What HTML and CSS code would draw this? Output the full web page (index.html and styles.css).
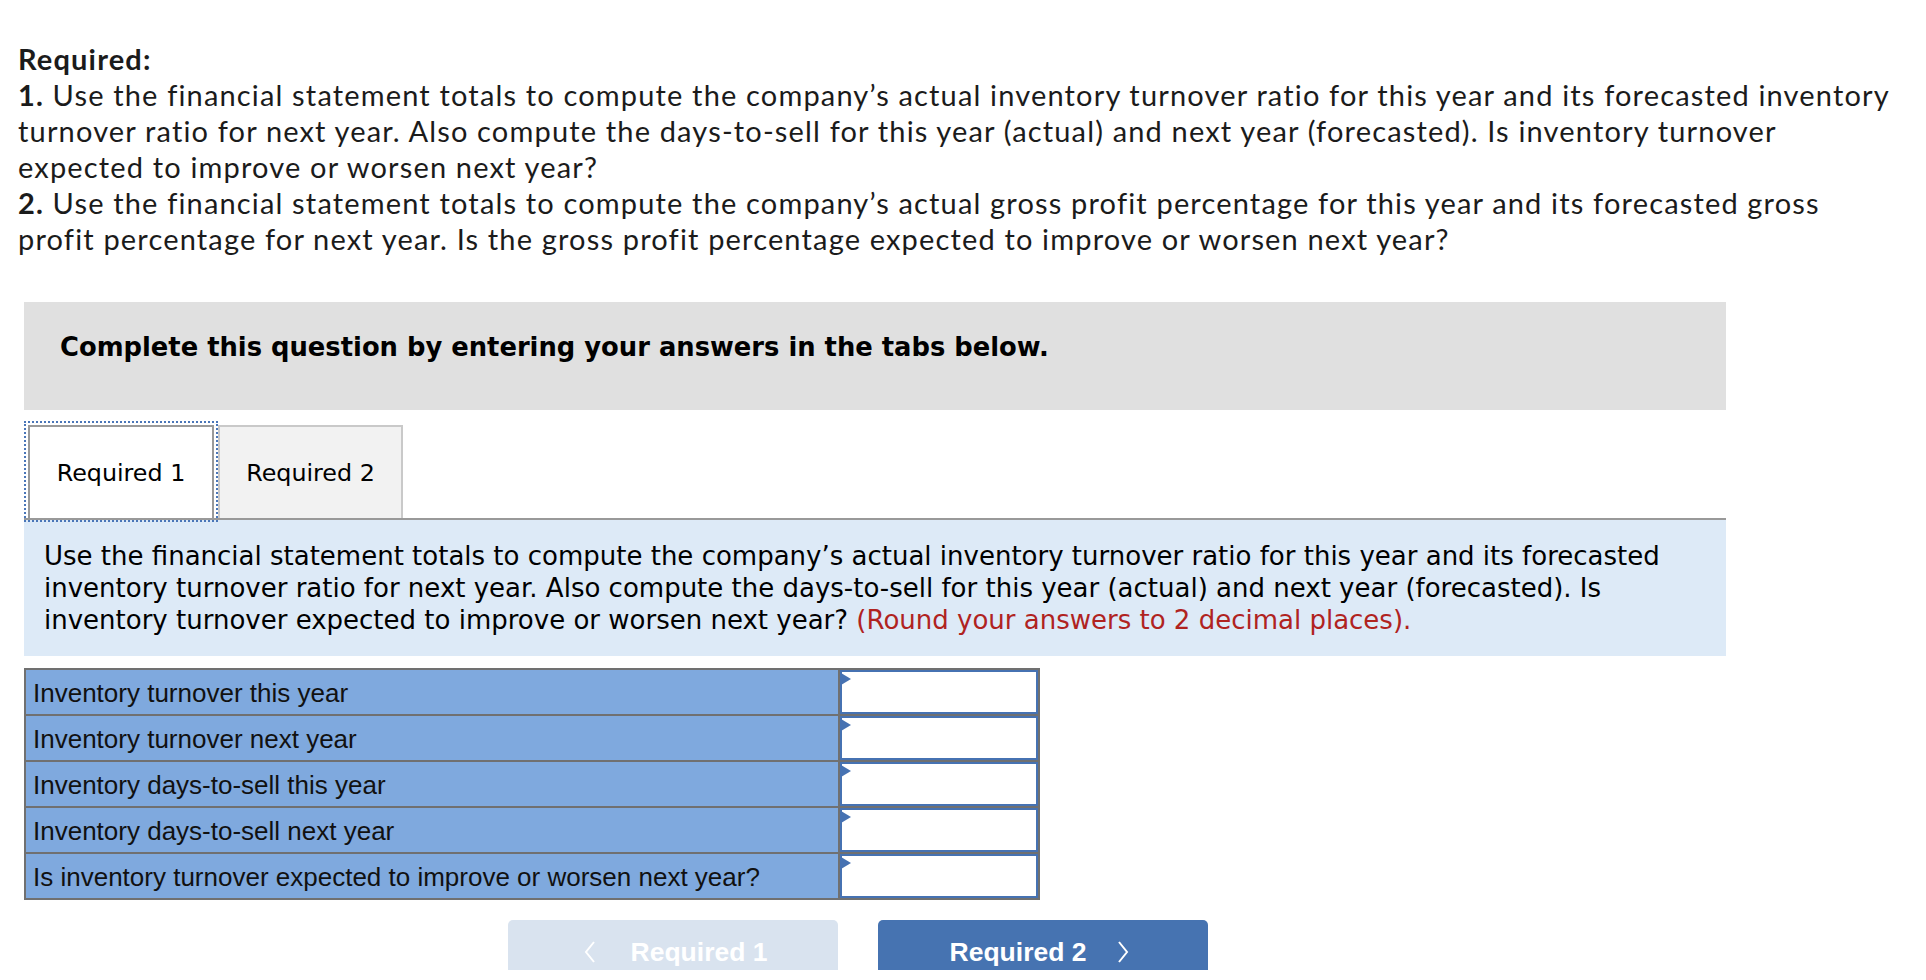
FILE: index.html
```html
<!DOCTYPE html>
<html lang="en">
<head>
<meta charset="utf-8">
<title>Required</title>
<link rel="stylesheet" href="styles.css">
</head>
<body>
<div class="page">
  <div class="req">
    <p class="req-line"><strong>Required:</strong></p>
    <p class="req-line"><strong>1.</strong> Use the financial statement totals to compute the company’s actual inventory turnover ratio for this year and its forecasted inventory turnover ratio for next year. Also compute the days-to-sell for this year (actual) and next year (forecasted). Is inventory turnover expected to improve or worsen next year?</p>
    <p class="req-line"><strong>2.</strong> Use the financial statement totals to compute the company’s actual gross profit percentage for this year and its forecasted gross profit percentage for next year. Is the gross profit percentage expected to improve or worsen next year?</p>
  </div>

  <div class="widget">
    <div class="banner">Complete this question by entering your answers in the tabs below.</div>

    <div class="tabs">
      <div class="tab tab-active">Required 1</div>
      <div class="tab">Required 2</div>
    </div>

    <div class="info">
      Use the financial statement totals to compute the company’s actual inventory turnover ratio for this year and its forecasted inventory turnover ratio for next year. Also compute the days-to-sell for this year (actual) and next year (forecasted). Is inventory turnover expected to improve or worsen next year? <span class="hint">(Round your answers to 2 decimal places).</span>
    </div>

    <div class="answers">
      <div class="label">Inventory turnover this year</div>
      <div class="cell"><div class="input"></div></div>
      <div class="label">Inventory turnover next year</div>
      <div class="cell"><div class="input"></div></div>
      <div class="label">Inventory days-to-sell this year</div>
      <div class="cell"><div class="input"></div></div>
      <div class="label">Inventory days-to-sell next year</div>
      <div class="cell"><div class="input"></div></div>
      <div class="label">Is inventory turnover expected to improve or worsen next year?</div>
      <div class="cell"><div class="input"></div></div>
    </div>

    <div class="nav">
      <div class="btn btn-prev">
        <svg class="chev" width="14" height="24" viewBox="0 0 14 24"><polyline points="11,2 3,12 11,22" fill="none" stroke="#ffffff" stroke-width="2"/></svg>
        <span>Required 1</span>
      </div>
      <div class="btn btn-next">
        <span>Required 2</span>
        <svg class="chev" width="14" height="24" viewBox="0 0 14 24"><polyline points="3,2 11,12 3,22" fill="none" stroke="#ffffff" stroke-width="2"/></svg>
      </div>
    </div>
  </div>
</div>
</body>
</html>
```

FILE: styles.css
```css
html, body {
  margin: 0;
  padding: 0;
  background: #ffffff;
}

.page {
  padding: 41px 0 0 18px;
  width: 1874px;
}

.req {
  font-family: "Lato", "Open Sans", sans-serif;
  font-size: 29px;
  line-height: 36px;
  letter-spacing: 0.04em;
  color: #1b1b1b;
}

.req-line {
  margin: 0;
}

.req-line strong {
  font-weight: 700;
}

.widget {
  margin: 45px 0 0 6px;
  width: 1702px;
}

.banner {
  background: #e0e0e0;
  height: 108px;
  box-sizing: border-box;
  padding: 29px 36px 0 36px;
  font-family: "DejaVu Sans", Verdana, sans-serif;
  font-weight: 700;
  font-size: 25.8px;
  line-height: 32px;
  color: #000000;
}

.tabs {
  display: flex;
  align-items: flex-end;
  gap: 4px;
  margin-top: 15px;
  padding-left: 4px;
  border-bottom: 2px solid #999999;
}

.tab {
  width: 185px;
  height: 93px;
  box-sizing: border-box;
  display: flex;
  align-items: center;
  justify-content: center;
  font-family: "DejaVu Sans", Verdana, sans-serif;
  font-size: 23.8px;
  color: #000000;
  background: #f2f2f2;
  border: 2px solid #c9c9c9;
  border-bottom: none;
}

.tab-active {
  width: 186px;
  background: #ffffff;
  border: 2px solid #9a9a9a;
  border-bottom: none;
  outline: 2px dotted #4a76b8;
  outline-offset: 2px;
}

.info {
  background: #ddeaf7;
  padding: 20px 30px 20px 20px;
  font-family: "DejaVu Sans", Verdana, sans-serif;
  font-size: 26px;
  line-height: 32px;
  color: #000000;
}

.hint {
  color: #b0231f;
}

.answers {
  margin-top: 12px;
  width: 1016px;
  box-sizing: border-box;
  display: grid;
  grid-template-columns: 812px 198px;
  grid-auto-rows: 44px;
  gap: 2px;
  background: #707070;
  border: 2px solid #707070;
}

.label {
  background: #7fa9de;
  display: flex;
  align-items: center;
  padding: 3px 0 0 7px;
  font-family: "Liberation Sans", Arial, sans-serif;
  font-size: 26px;
  color: #111111;
}

.cell {
  background: #ffffff;
  position: relative;
}

.input {
  height: 100%;
  box-sizing: border-box;
  border: 2px solid #4672b2;
  background: #ffffff;
}

.cell::before {
  content: "";
  position: absolute;
  left: 1px;
  top: 3px;
  width: 0;
  height: 0;
  border-left: 10px solid #4672b2;
  border-top: 6px solid transparent;
  border-bottom: 6px solid transparent;
}

.nav {
  display: flex;
  gap: 40px;
  margin-top: 20px;
  padding-left: 484px;
}

.btn {
  width: 330px;
  height: 50px;
  border-radius: 5px 5px 0 0;
  display: flex;
  align-items: center;
  justify-content: center;
  gap: 30px;
  padding-top: 14px;
  box-sizing: border-box;
  font-family: "Liberation Sans", Arial, sans-serif;
  font-weight: 700;
  font-size: 26.5px;
  color: #ffffff;
}

.btn-prev {
  background: #d9e3ef;
  gap: 34px;
  padding-left: 4px;
}

.btn-next {
  background: #4673b1;
  padding-right: 6px;
}

.chev {
  display: block;
  flex: none;
}
```
